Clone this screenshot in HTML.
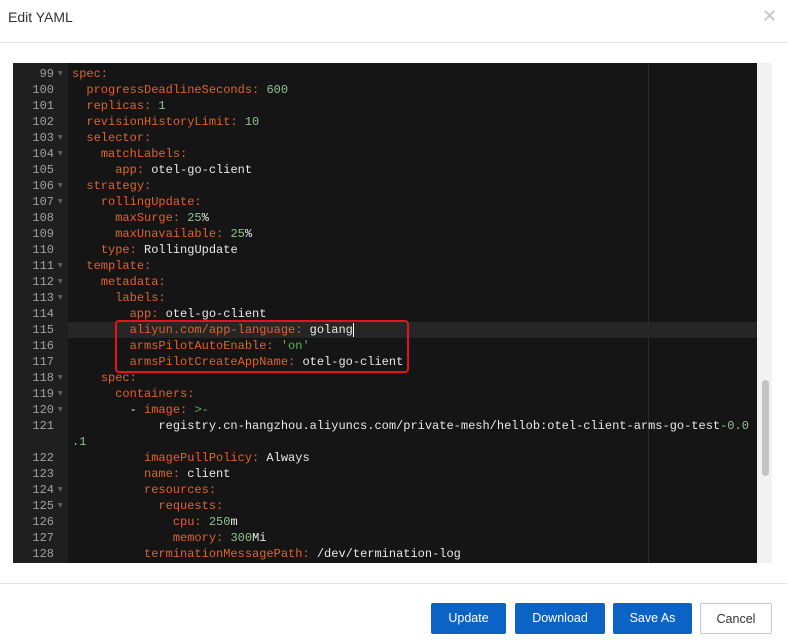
<!DOCTYPE html>
<html><head><meta charset="utf-8"><style>
*{margin:0;padding:0;box-sizing:border-box}
body{width:788px;height:644px;background:#fff;position:relative;overflow:hidden;font-family:"Liberation Sans",sans-serif}
.title{position:absolute;left:8px;top:9px;font-size:14px;color:#333}
.hl{position:absolute;left:0;right:0;top:42px;border-top:1px solid #e3e3e3}
.fl{position:absolute;left:0;right:0;top:583px;border-top:1px solid #e3e3e3}
.ed{position:absolute;left:13px;top:63px;width:744px;height:500px;background:#151515;overflow:hidden}
.gut{position:absolute;left:0;top:0;width:55px;height:500px;background:#1f1f1f}
.sb{position:absolute;left:757px;top:63px;width:15px;height:500px;background:#f2f2f2}
.th{position:absolute;left:762px;top:380px;width:7px;height:96px;background:#c4c4c4;border-radius:4px}
.pm{position:absolute;left:635px;top:0;width:1px;height:500px;background:#2a2a2a}
.ln{position:absolute;height:16px;line-height:16px;font-family:"Liberation Mono",monospace;font-size:12px;white-space:pre}
.n{left:0;width:41px;text-align:right;color:#a0a0a0}
.f{position:absolute;left:45px;color:#666;font-size:6px;line-height:16px;font-family:"DejaVu Sans",sans-serif}
.c{left:59px;color:#e8e8e8}
.k{color:#e0622d}.v{color:#8fc48f}.s{color:#4fbf4f}.w{color:#e8e8e8}
.act{position:absolute;left:55px;right:0;height:16px;background:#262626}
.box{position:absolute;left:115px;top:320px;width:294px;height:53px;border:2px solid #e8101a;border-radius:4px}
.btn{position:absolute;top:603px;height:31px;font-size:12.5px;line-height:31px;text-align:center;border-radius:2px;background:#0b63c6;color:#fff}
.x{position:absolute;left:762px;top:6px;font-size:18px;color:#c4c4c4;font-family:"DejaVu Sans",sans-serif;font-weight:200}
</style></head><body>
<div class="title">Edit YAML</div>
<div class="x">✕</div>
<div class="hl"></div>
<div class="ed">
<div class="gut"></div>
<div class="act" style="top:259px"></div>
<div class="pm"></div>
<div id="L"></div>
</div>
<div class="box"></div>
<div class="sb"></div><div class="th"></div>
<div class="fl"></div>
<div class="btn" style="left:431px;width:75px">Update</div>
<div class="btn" style="left:515px;width:90px">Download</div>
<div class="btn" style="left:613px;width:79px">Save As</div>
<div class="btn" style="left:700px;width:72px;background:#fff;color:#333;border:1px solid #c9c9c9">Cancel</div>
<script>
var L=[
[99,0,'<span class="k">spec:</span>',1],
[100,2,'<span class="k">progressDeadlineSeconds:</span> <span class="v">600</span>'],
[101,2,'<span class="k">replicas:</span> <span class="v">1</span>'],
[102,2,'<span class="k">revisionHistoryLimit:</span> <span class="v">10</span>'],
[103,2,'<span class="k">selector:</span>',1],
[104,4,'<span class="k">matchLabels:</span>',1],
[105,6,'<span class="k">app:</span> otel-go-client'],
[106,2,'<span class="k">strategy:</span>',1],
[107,4,'<span class="k">rollingUpdate:</span>',1],
[108,6,'<span class="k">maxSurge:</span> <span class="v">25</span>%'],
[109,6,'<span class="k">maxUnavailable:</span> <span class="v">25</span>%'],
[110,4,'<span class="k">type:</span> RollingUpdate'],
[111,2,'<span class="k">template:</span>',1],
[112,4,'<span class="k">metadata:</span>',1],
[113,6,'<span class="k">labels:</span>',1],
[114,8,'<span class="k">app:</span> otel-go-client'],
[115,8,'<span class="k">aliyun.com/app-language:</span> golang<span style="border-left:1.5px solid #fff"></span>'],
[116,8,'<span class="k">armsPilotAutoEnable:</span> <span class="s">\'on\'</span>'],
[117,8,'<span class="k">armsPilotCreateAppName:</span> otel-go-client'],
[118,4,'<span class="k">spec:</span>',1],
[119,6,'<span class="k">containers:</span>',1],
[120,8,'<span class="w">- </span><span class="k">image:</span> <span class="s">&gt;-</span>',1],
[121,12,'registry.cn-hangzhou.aliyuncs.com/private-mesh/hellob:otel-client-arms-go-test<span class="v">-0.0</span>'],
[0,0,'<span class="v">.1</span>'],
[122,10,'<span class="k">imagePullPolicy:</span> Always'],
[123,10,'<span class="k">name:</span> client'],
[124,10,'<span class="k">resources:</span>',1],
[125,12,'<span class="k">requests:</span>',1],
[126,14,'<span class="k">cpu:</span> <span class="v">250</span>m'],
[127,14,'<span class="k">memory:</span> <span class="v">300</span>Mi'],
[128,10,'<span class="k">terminationMessagePath:</span> /dev/termination-log']
];
var h='';
L.forEach(function(r,i){var t=3+16*i;
if(r[0])h+='<div class="ln n" style="top:'+t+'px">'+r[0]+'</div>';
if(r[3])h+='<div class="f" style="top:'+t+'px">▼</div>';
h+='<div class="ln c" style="top:'+t+'px">'+' '.repeat(r[1])+r[2]+'</div>';});
document.getElementById('L').innerHTML=h;
</script>
</body></html>
